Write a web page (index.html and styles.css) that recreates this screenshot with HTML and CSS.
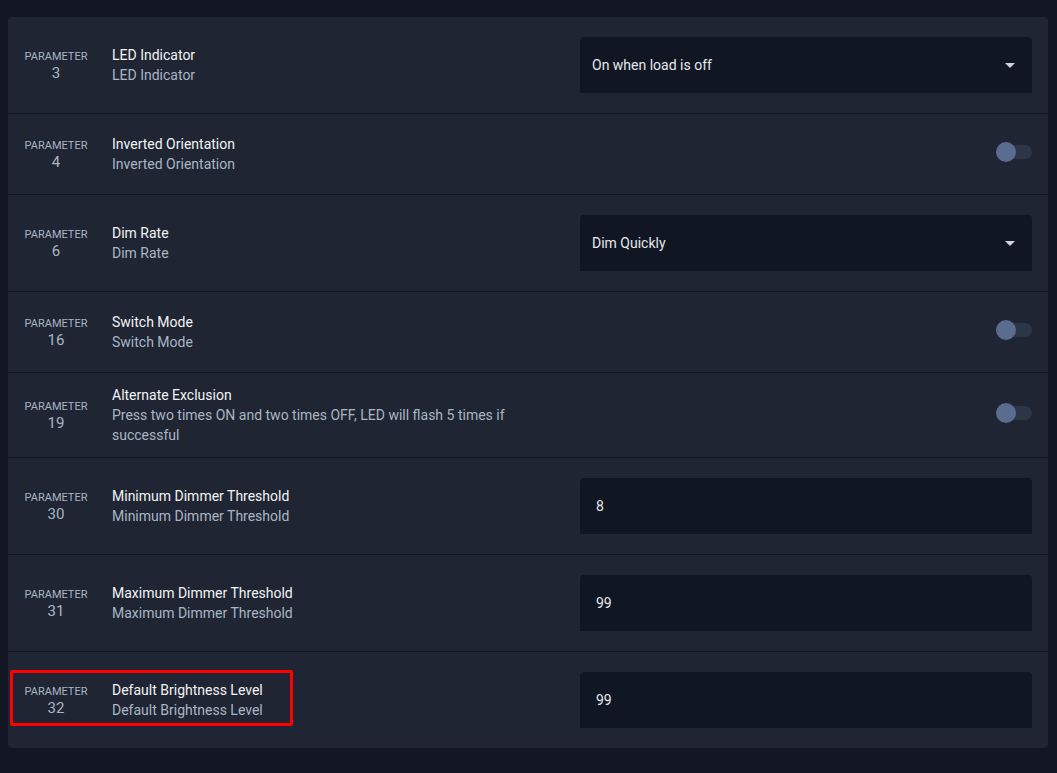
FILE: index.html
```html
<!DOCTYPE html>
<html>
<head>
<meta charset="utf-8">
<link rel="stylesheet" href="styles.css">
</head>
<body>
<div class="card">
  <div class="row">
    <div class="param"><span class="plabel">PARAMETER</span><span class="pnum">3</span></div>
    <div class="text"><div class="title">LED Indicator</div><div class="desc">LED Indicator</div></div>
    <div class="control"><div class="select"><span>On when load is off</span><span class="arrow"></span></div></div>
  </div>
  <div class="row">
    <div class="param"><span class="plabel">PARAMETER</span><span class="pnum">4</span></div>
    <div class="text"><div class="title">Inverted Orientation</div><div class="desc">Inverted Orientation</div></div>
    <div class="control end"><div class="toggle"><span class="knob"></span></div></div>
  </div>
  <div class="row">
    <div class="param"><span class="plabel">PARAMETER</span><span class="pnum">6</span></div>
    <div class="text"><div class="title">Dim Rate</div><div class="desc">Dim Rate</div></div>
    <div class="control"><div class="select"><span>Dim Quickly</span><span class="arrow"></span></div></div>
  </div>
  <div class="row">
    <div class="param"><span class="plabel">PARAMETER</span><span class="pnum">16</span></div>
    <div class="text"><div class="title">Switch Mode</div><div class="desc">Switch Mode</div></div>
    <div class="control end"><div class="toggle"><span class="knob"></span></div></div>
  </div>
  <div class="row">
    <div class="param"><span class="plabel">PARAMETER</span><span class="pnum">19</span></div>
    <div class="text"><div class="title">Alternate Exclusion</div><div class="desc">Press two times ON and two times OFF, LED will flash 5 times if successful</div></div>
    <div class="control end"><div class="toggle"><span class="knob"></span></div></div>
  </div>
  <div class="row">
    <div class="param"><span class="plabel">PARAMETER</span><span class="pnum">30</span></div>
    <div class="text"><div class="title">Minimum Dimmer Threshold</div><div class="desc">Minimum Dimmer Threshold</div></div>
    <div class="control"><div class="input">8</div></div>
  </div>
  <div class="row">
    <div class="param"><span class="plabel">PARAMETER</span><span class="pnum">31</span></div>
    <div class="text"><div class="title">Maximum Dimmer Threshold</div><div class="desc">Maximum Dimmer Threshold</div></div>
    <div class="control"><div class="input">99</div></div>
  </div>
  <div class="row last">
    <div class="highlight"></div>
    <div class="param"><span class="plabel">PARAMETER</span><span class="pnum">32</span></div>
    <div class="text"><div class="title">Default Brightness Level</div><div class="desc">Default Brightness Level</div></div>
    <div class="control"><div class="input">99</div></div>
  </div>
</div>
</body>
</html>
```

FILE: styles.css
```css
* { box-sizing: border-box; }
html, body { margin: 0; padding: 0; }
body {
  background: #121723;
  font-family: Roboto, "Liberation Sans", sans-serif;
  padding: 17px 9px 26px 8px;
  min-height: 773px;
}
.card {
  background: #1f2532;
  border-radius: 4px;
  width: 1040px;
}
.row {
  position: relative;
  display: grid;
  grid-template-columns: 64px 1fr 452px;
  column-gap: 24px;
  align-items: center;
  padding: 12px 16px;
  min-height: 81px;
  border-bottom: 1px solid #131924;
}
.row.last { border-bottom: none; }
.param {
  display: flex;
  flex-direction: column;
  align-items: center;
  color: #a9b5c4;
}
.plabel { font-size: 11px; line-height: 17px; }
.pnum { font-size: 15px; line-height: 17px; }
.text { font-size: 14px; line-height: 20px; }
.title { color: #f3f4f6; font-weight: 400; }
.desc { color: #aab6c5; }
.control { display: flex; }
.control.end { justify-content: flex-end; }
.select, .input {
  width: 452px;
  height: 56px;
  margin: 8px 0;
  background: #111722;
  border-radius: 4px 4px 0 0;
  display: flex;
  align-items: center;
  color: #e6e8eb;
  font-size: 14px;
  font-weight: 400;
}
.select { padding: 0 17px 0 12px; justify-content: space-between; }
.input { padding: 0 16px; }
.arrow {
  width: 0; height: 0;
  border-left: 5px solid transparent;
  border-right: 5px solid transparent;
  border-top: 5px solid #cfd3d9;
}
.toggle {
  position: relative;
  width: 36px;
  height: 14px;
  border-radius: 7px;
  background: #2d3647;
  margin-bottom: 5px;
}
.knob {
  position: absolute;
  left: 0; top: -3px;
  width: 20px; height: 20px;
  border-radius: 50%;
  background: #5a6c8f;
}
.highlight {
  position: absolute;
  left: 2px; top: 18px;
  width: 283px; height: 56px;
  border: 3px solid #ff0000;
  border-radius: 2px;
}
```
